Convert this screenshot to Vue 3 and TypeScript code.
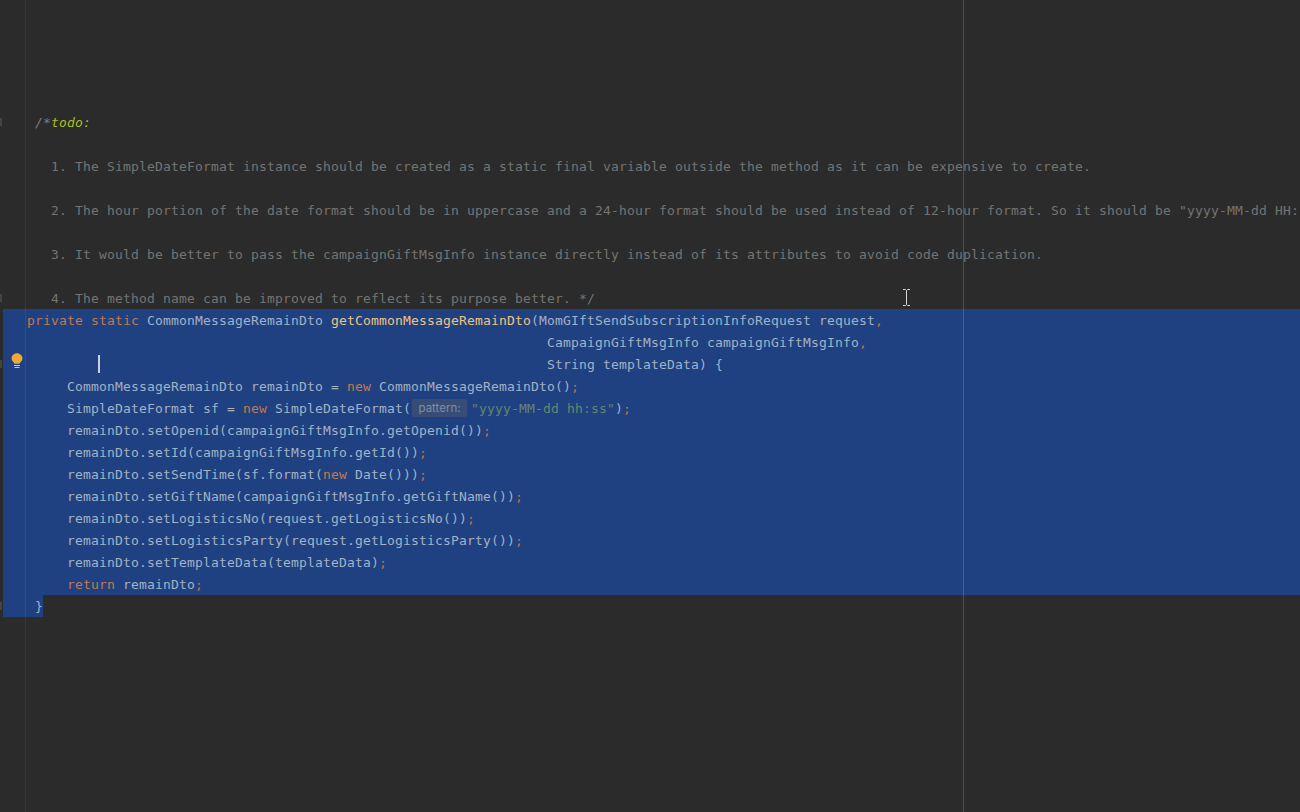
<script setup lang="ts">
type Kind = 'plain' | 'kw' | 'fn' | 'str' | 'semi' | 'cm' | 'todo' | 'hint' | 'caret'
interface Token { k: Kind; t?: string }
interface Row { tokens: Token[]; selected?: boolean; last?: boolean; fold?: boolean; bulb?: boolean; indent?: number }

const p = (t: string): Token => ({ k: 'plain', t })
const kw = (t: string): Token => ({ k: 'kw', t })
const semi = (t: string): Token => ({ k: 'semi', t })
const cm = (t: string): Token => ({ k: 'cm', t })

const blank: Row = { tokens: [] }
const rows: Row[] = [
  { fold: true, indent: 1, tokens: [{ k: 'todo', t: '/*' }, { k: 'todo', t: 'todo:' }] },
  blank,
  { indent: 3, tokens: [cm('1. The SimpleDateFormat instance should be created as a static final variable outside the method as it can be expensive to create.')] },
  blank,
  { indent: 3, tokens: [cm('2. The hour portion of the date format should be in uppercase and a 24-hour format should be used instead of 12-hour format. So it should be "yyyy-MM-dd HH:')] },
  blank,
  { indent: 3, tokens: [cm('3. It would be better to pass the campaignGiftMsgInfo instance directly instead of its attributes to avoid code duplication.')] },
  blank,
  { fold: true, indent: 3, tokens: [cm('4. The method name can be improved to reflect its purpose better. */')] },
  { selected: true, tokens: [kw('private static '), p('CommonMessageRemainDto '), { k: 'fn', t: 'getCommonMessageRemainDto' }, p('(MomGIftSendSubscriptionInfoRequest request'), semi(',')] },
  { selected: true, indent: 65, tokens: [p('CampaignGiftMsgInfo campaignGiftMsgInfo'), semi(',')] },
  { selected: true, bulb: true, fold: true, tokens: [p('         '), { k: 'caret' }, p('                                                        String templateData) {')] },
  { selected: true, indent: 5, tokens: [p('CommonMessageRemainDto remainDto = '), kw('new '), p('CommonMessageRemainDto()'), semi(';')] },
  { selected: true, indent: 5, tokens: [p('SimpleDateFormat sf = '), kw('new '), p('SimpleDateFormat('), { k: 'hint', t: 'pattern:' }, { k: 'str', t: '"yyyy-MM-dd hh:ss"' }, p(')'), semi(';')] },
  { selected: true, indent: 5, tokens: [p('remainDto.setOpenid(campaignGiftMsgInfo.getOpenid())'), semi(';')] },
  { selected: true, indent: 5, tokens: [p('remainDto.setId(campaignGiftMsgInfo.getId())'), semi(';')] },
  { selected: true, indent: 5, tokens: [p('remainDto.setSendTime(sf.format('), kw('new '), p('Date()))'), semi(';')] },
  { selected: true, indent: 5, tokens: [p('remainDto.setGiftName(campaignGiftMsgInfo.getGiftName())'), semi(';')] },
  { selected: true, indent: 5, tokens: [p('remainDto.setLogisticsNo(request.getLogisticsNo())'), semi(';')] },
  { selected: true, indent: 5, tokens: [p('remainDto.setLogisticsParty(request.getLogisticsParty())'), semi(';')] },
  { selected: true, indent: 5, tokens: [p('remainDto.setTemplateData(templateData)'), semi(';')] },
  { selected: true, indent: 5, tokens: [kw('return '), p('remainDto'), semi(';')] },
  { selected: true, last: true, fold: true, indent: 1, tokens: [p('}')] }
]
</script>

<template>
  <main class="editor">
    <div
      v-for="(row, i) in rows"
      :key="i"
      class="row"
      :class="{ selected: row.selected, last: row.last }"
    >
      <i v-if="row.fold" class="fold"></i>
      <svg v-if="row.bulb" class="bulb" width="12" height="16" viewBox="0 0 12 16" aria-hidden="true">
        <path d="M6 .2c3 0 5.400 2.300 5.400 5.100 0 1.900-1 3.100-2 4-.5.500-.7.900-.8 1.500H3.400c-.1-.6-.3-1-.8-1.500-1-.9-2-2.100-2-4C.6 2.500 3 .2 6 .2z" fill="#f2a835" />
        <path d="M3 12.500h6M3.500 14.500h5" stroke="#cfc9a6" stroke-width="1" fill="none" />
      </svg>
      <span class="code" :style="{ paddingLeft: (row.indent ?? 0) * 8 + 'px' }">
        <template v-for="(tok, j) in row.tokens" :key="j">
          <i v-if="tok.k === 'caret'" class="caret"></i>
          <span v-else :class="tok.k">{{ tok.t }}</span>
        </template>
      </span>
    </div>

    <i class="guide gutter-line"></i>
    <i class="guide margin-line"></i>

    <svg class="ibeam" width="9" height="17" viewBox="0 0 9 17" aria-hidden="true">
      <path d="M1 .5h2.500L4.500 1.500 5.500.5H8M4.500 1.500v14M1 16.500h2.500l1-1 1 1H8" fill="none" stroke="#d8d8d8" stroke-width="1" />
    </svg>
  </main>
</template>

<style>
html, body { margin: 0; background: #2b2b2b; }
</style>

<style scoped>
.editor {
  position: relative;
  box-sizing: border-box;
  width: 1300px;
  height: 812px;
  overflow: hidden;
  padding-top: 111px;
  background: #2b2b2b;
  font-family: "DejaVu Sans Mono", "Liberation Mono", monospace;
  font-size: 13px;
  letter-spacing: 0.174px;
  color: #a3b2c4;
}
.row {
  position: relative;
  height: 22px;
  line-height: 24px;
  padding-left: 27px;
  white-space: pre;
}
.row.selected {
  margin-left: 3px;
  padding-left: 24px;
  background: #1f4182;
}
.row.last { width: 16px; }
.code { display: block; }
.kw { color: #c0794f; }
.fn { color: #f0c47c; }
.str { color: #64876f; }
.semi { color: #b8764e; }
.cm { color: #747474; }
.todo { color: #a8c023; font-style: italic; }
.todo:first-child { color: #7d7d7d; }
.hint {
  display: inline-block;
  width: 55px;
  height: 18px;
  margin: 0 4px 0 1px;
  border-radius: 2px;
  background: #374d75;
  color: #7f8da3;
  font-family: Inter, "Liberation Sans", sans-serif;
  font-size: 11.5px;
  letter-spacing: 0;
  line-height: 18px;
  text-align: center;
  vertical-align: 1px;
}
.caret {
  display: inline-block;
  width: 2px;
  height: 18px;
  margin: 0 -1px;
  background: #c8d2de;
  vertical-align: -4px;
}
.fold {
  position: absolute;
  left: 0;
  top: 7px;
  width: 2px;
  height: 8px;
  background: #444444;
}
.selected .fold { left: -3px; }
.bulb {
  position: absolute;
  left: 8px;
  top: 0;
}
.guide {
  position: absolute;
  top: 0;
  bottom: 0;
  width: 1px;
}
.gutter-line { left: 25px; background: rgba(255, 255, 255, 0.06); }
.margin-line { left: 963px; background: rgba(255, 255, 255, 0.16); }
.ibeam {
  position: absolute;
  left: 902px;
  top: 289px;
}
</style>
